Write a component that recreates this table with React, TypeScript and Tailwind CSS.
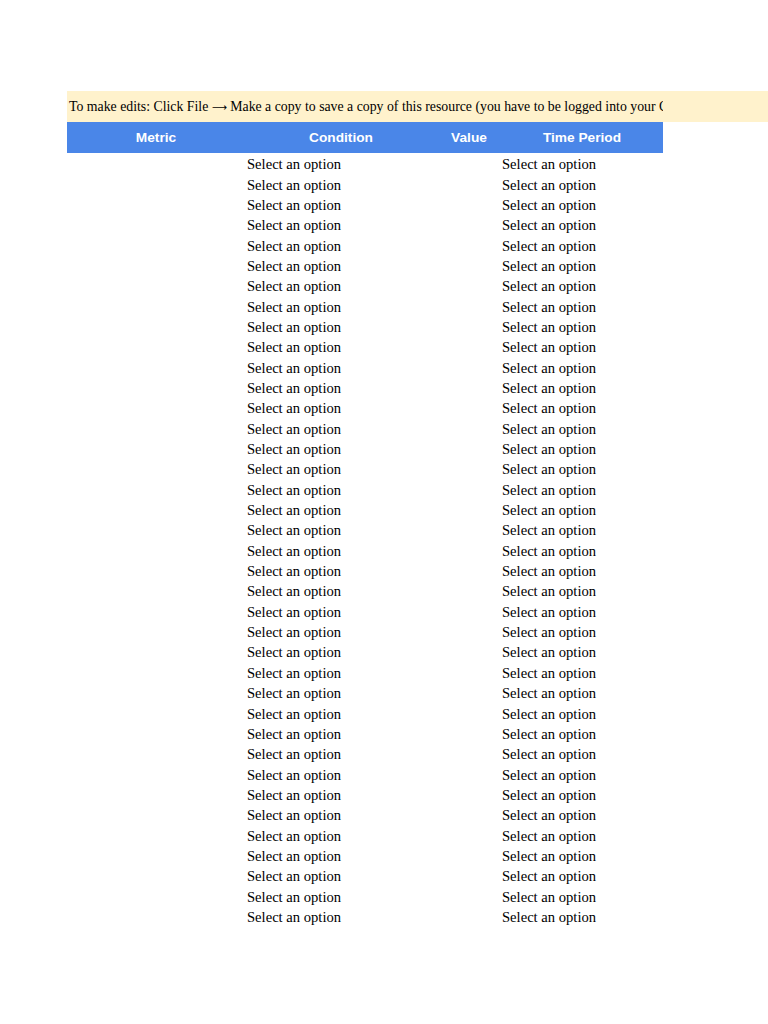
const ROWS = Array.from({ length: 38 }, (_, i) => i);

const COLS = [
  { label: 'Metric', w: 'w-[178px]' },
  { label: 'Condition', w: 'w-[192px]' },
  { label: 'Value', w: 'w-[64px]' },
  { label: 'Time Period', w: 'w-[162px]' },
];

export default function App() {
  return (
    <div className="min-h-[1024px] w-[768px] bg-white pt-[91px] pl-[67px]">
      {/* Notice banner */}
      <div className="flex h-[31px] items-center bg-[#fff2cc] pt-[2px]">
        <div className="w-[596px] overflow-hidden whitespace-nowrap pl-[2px] text-[13.8px] text-black [font-family:'Liberation_Serif',serif]">
          To make edits: Click File <span className="[font-family:'DejaVu_Sans',sans-serif] text-[10.5px]">⟶</span> Make a copy to save a copy of this resource (you have to be logged into your Google account)
        </div>
      </div>

      {/* Header */}
      <div className="flex h-[31px] w-[596px] items-center bg-[#4a86e8] pt-[2px] text-[13.7px] font-bold text-white [font-family:'Liberation_Sans',Arial,sans-serif]">
        {COLS.map((c) => (
          <div key={c.label} className={`${c.w} text-center`}>
            {c.label}
          </div>
        ))}
      </div>

      {/* Rows */}
      <div className="pt-[2px] text-[14.6px] text-black [font-family:'Liberation_Serif',serif]">
        {ROWS.map((i) => (
          <div key={i} className="flex h-[20.35px] items-center">
            <div className="w-[178px]" />
            <div className="w-[192px] pl-[2px]">Select an option</div>
            <div className="w-[64px]" />
            <div className="w-[162px] pl-[1px]">Select an option</div>
          </div>
        ))}
      </div>
    </div>
  );
}
